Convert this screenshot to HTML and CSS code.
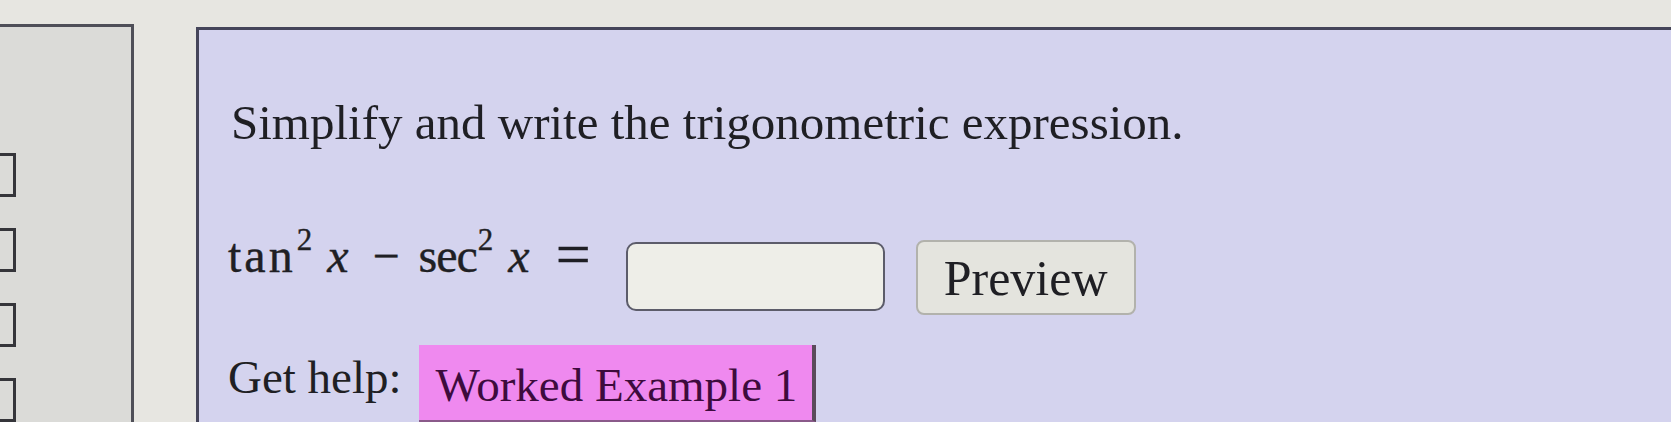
FILE: index.html
```html
<!DOCTYPE html>
<html lang="en">
<head>
    <meta charset="UTF-8">
    <meta name="viewport" content="width=device-width, initial-scale=1.0">
    <title>Simplify</title>
    <link rel="stylesheet" href="styles.css">
</head>
<body>
    <div class="page">
        <!-- Left column with the question list -->
        <div class="sidebar">
            <div class="mark"></div>
            <div class="mark"></div>
            <div class="mark"></div>
            <div class="mark"></div>
        </div>

        <!-- Problem panel -->
        <div class="panel">
            <p class="prompt">Simplify and write the trigonometric expression.</p>

            <div class="equation">
                <span class="math"><span class="fn tan">tan</span><sup>2</sup><i class="var">x</i><span class="op minus">&minus;</span><span class="fn sec">sec</span><sup>2</sup><i class="var">x</i><span class="op eq">=</span></span>
                <input type="text" class="answer">
                <button type="button" class="preview">Preview</button>
            </div>

            <div class="help">
                <span class="help-label">Get help:</span>
                <a class="example" href="#">Worked Example 1</a>
            </div>
        </div>
    </div>
</body>
</html>
```

FILE: styles.css
```css
body {
    margin: 0;
    padding: 0;
    width: 1671px;
    height: 422px;
    overflow: hidden;
    background-color: #e7e6e1;
    font-family: "Liberation Serif", "Times New Roman", serif;
    color: #1f1f24;
}

.page {
    display: flex;
    height: 422px;
}

.sidebar {
    flex: none;
    width: 131px;
    margin-top: 24px;
    padding-top: 126px;
    background: #dbdbd8;
    border-top: 3px solid #4f4f58;
    border-right: 3px solid #4f4f58;
    display: flex;
    flex-direction: column;
    gap: 31px;
}

.mark {
    width: 13px;
    height: 38px;
    border: 3px solid #35353a;
    border-left: none;
}

.panel {
    flex: 1;
    margin-left: 62px;
    margin-top: 27px;
    padding: 65px 0 0 29px;
    background: #d4d3ee;
    border-top: 3px solid #45455a;
    border-left: 3px solid #45455a;
}

.prompt {
    margin: 0 0 77px 3px;
    font-size: 49px;
    line-height: 56px;
}

.equation {
    display: flex;
    align-items: flex-start;
}

.math {
    font-size: 48px;
    line-height: 55px;
    white-space: nowrap;
    -webkit-text-stroke: 0.4px #1f1f24;
}

.math sup {
    font-size: 31px;
    line-height: 0;
    vertical-align: 22px;
    margin-left: 1px;
}

.fn.tan {
    letter-spacing: 3px;
}

.fn.sec {
    letter-spacing: -1px;
    margin-left: 19px;
}

.var {
    margin-left: 15px;
}

.minus {
    margin-left: 24px;
}

.eq {
    margin-left: 26px;
    font-size: 62px;
    line-height: 0;
    vertical-align: -3px;
}

.answer {
    box-sizing: border-box;
    width: 259px;
    height: 69px;
    margin: 14px 0 0 35px;
    background: #eeeee8;
    border: 2px solid #5c5c6a;
    border-radius: 10px;
}

.preview {
    box-sizing: border-box;
    width: 220px;
    height: 75px;
    margin: 12px 0 0 31px;
    padding: 0;
    background: #e4e4de;
    border: 2px solid #b2b2ac;
    border-radius: 8px;
    font-family: "Liberation Serif", "Times New Roman", serif;
    font-size: 50px;
    color: #1f1f24;
}

.help {
    display: flex;
    align-items: flex-start;
    gap: 17px;
    margin-top: 30px;
}

.help-label {
    margin-top: 5px;
    font-size: 47px;
    line-height: 55px;
}

.example {
    padding: 14px 15px 9px 17px;
    font-size: 47px;
    line-height: 52px;
    background: #ef89ef;
    color: #3d0b3d;
    text-decoration: none;
    border-right: 4px solid #5b4a5b;
    border-bottom: 2px solid #8a5a8a;
}
```
